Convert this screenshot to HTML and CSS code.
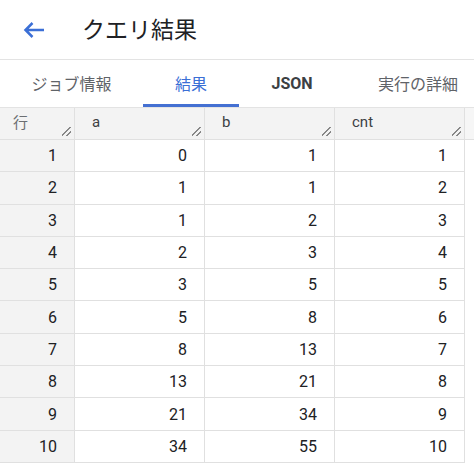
FILE: index.html
```html
<!DOCTYPE html>
<html lang="ja">
<head>
<meta charset="utf-8">
<title>クエリ結果</title>
<link rel="stylesheet" href="styles.css">
</head>
<body>
<header class="appbar">
  <svg class="back" width="22" height="18" viewBox="0 0 22 18"><path d="M21 9H2.5M9.5 2L2.5 9l7 7" fill="none" stroke="#3b6fd6" stroke-width="2.5" stroke-linecap="butt" stroke-linejoin="miter"/></svg>
  <h1 class="title">クエリ結果</h1>
</header>
<nav class="tabs">
  <div class="tab t1">ジョブ情報</div>
  <div class="tab t2 active">結果</div>
  <div class="tab t3 bold">JSON</div>
  <div class="tab t4">実行の詳細</div>
</nav>
<div class="grid">
  <div class="hrow">
    <div class="hcell num">行<span class="grip"></span></div>
    <div class="hcell col">a<span class="grip"></span></div>
    <div class="hcell col">b<span class="grip"></span></div>
    <div class="hcell col">cnt<span class="grip"></span></div>
    <div class="hcell rest"></div>
  </div>
  <div class="row"><div class="cell num">1</div><div class="cell">0</div><div class="cell">1</div><div class="cell">1</div></div>
  <div class="row"><div class="cell num">2</div><div class="cell">1</div><div class="cell">1</div><div class="cell">2</div></div>
  <div class="row"><div class="cell num">3</div><div class="cell">1</div><div class="cell">2</div><div class="cell">3</div></div>
  <div class="row"><div class="cell num">4</div><div class="cell">2</div><div class="cell">3</div><div class="cell">4</div></div>
  <div class="row"><div class="cell num">5</div><div class="cell">3</div><div class="cell">5</div><div class="cell">5</div></div>
  <div class="row"><div class="cell num">6</div><div class="cell">5</div><div class="cell">8</div><div class="cell">6</div></div>
  <div class="row"><div class="cell num">7</div><div class="cell">8</div><div class="cell">13</div><div class="cell">7</div></div>
  <div class="row"><div class="cell num">8</div><div class="cell">13</div><div class="cell">21</div><div class="cell">8</div></div>
  <div class="row"><div class="cell num">9</div><div class="cell">21</div><div class="cell">34</div><div class="cell">9</div></div>
  <div class="row"><div class="cell num">10</div><div class="cell">34</div><div class="cell">55</div><div class="cell">10</div></div>
</div>
</body>
</html>
```
FILE: styles.css
```css
* { box-sizing: border-box; }
html, body { margin: 0; padding: 0; background: #fff; }
body {
  width: 474px;
  height: 470px;
  overflow: hidden;
  font-family: Roboto, "Noto Sans CJK JP", sans-serif;
  color: #202124;
}
.appbar {
  height: 60px;
  border-bottom: 1px solid #e3e3e3;
  display: flex;
  align-items: center;
  padding-left: 23px;
}
.back { display: block; margin-top: 1px; }
.title {
  margin: 0 0 4px 37px;
  font-size: 23px;
  font-weight: 400;
  color: #202124;
  font-family: "Noto Sans CJK JP", sans-serif;
}
.tabs {
  height: 47px;
  display: flex;
  overflow: hidden;
  white-space: nowrap;
}
.tab {
  flex-shrink: 0;
  display: flex;
  align-items: center;
  justify-content: center;
  font-size: 16px;
  color: #5f6368;
  font-family: "Noto Sans CJK JP", sans-serif;
  padding-bottom: 1px;
}
.t1 { width: 143px; }
.t2 { width: 96px; }
.t3 { width: 106px; }
.t4 { width: 146px; }
.tab.bold { font-family: Roboto, sans-serif; font-weight: 700; color: #3c4043; }
.tab.active {
  color: #3b6fd6;
  border-bottom: 3px solid #4470d2;
  padding-bottom: 0;
  padding-top: 2px;
}
.grid { width: 474px; }
.hrow {
  display: flex;
  height: 33px;
  border-top: 1px solid #e3e3e3;
  border-bottom: 1px solid #e0e0e0;
  background: #f3f3f3;
}
.hcell {
  flex-shrink: 0;
  position: relative;
  border-right: 1px solid #e0e0e0;
  padding: 5px 0 0 17px;
  font-size: 15px;
  color: #3c4043;
}
.hcell.num { width: 75px; padding-left: 13px; color: #6b6e72; font-family: "Noto Sans CJK JP", sans-serif; padding-top: 3px; }
.hcell.col { width: 130px; }
.hcell.rest { flex: 1 1 auto; border-right: none; background: #f6f6f6; }
.grip {
  position: absolute;
  right: 3px;
  bottom: 3px;
  width: 9px;
  height: 9px;
  background:
    linear-gradient(135deg, transparent 0 42%, #888 42% 54%, transparent 54% 70%, #888 70% 82%, transparent 82%);
}
.row {
  display: flex;
  width: 465px;
  height: 32.3px;
}
.cell {
  flex-shrink: 0;
  width: 130px;
  border-right: 1px solid #e0e0e0;
  border-bottom: 1px solid #e0e0e0;
  display: flex;
  align-items: center;
  justify-content: flex-end;
  padding-right: 17px;
  font-size: 16px;
  color: #202124;
}
.cell.num {
  width: 75px;
  background: #f3f3f3;
}
```
